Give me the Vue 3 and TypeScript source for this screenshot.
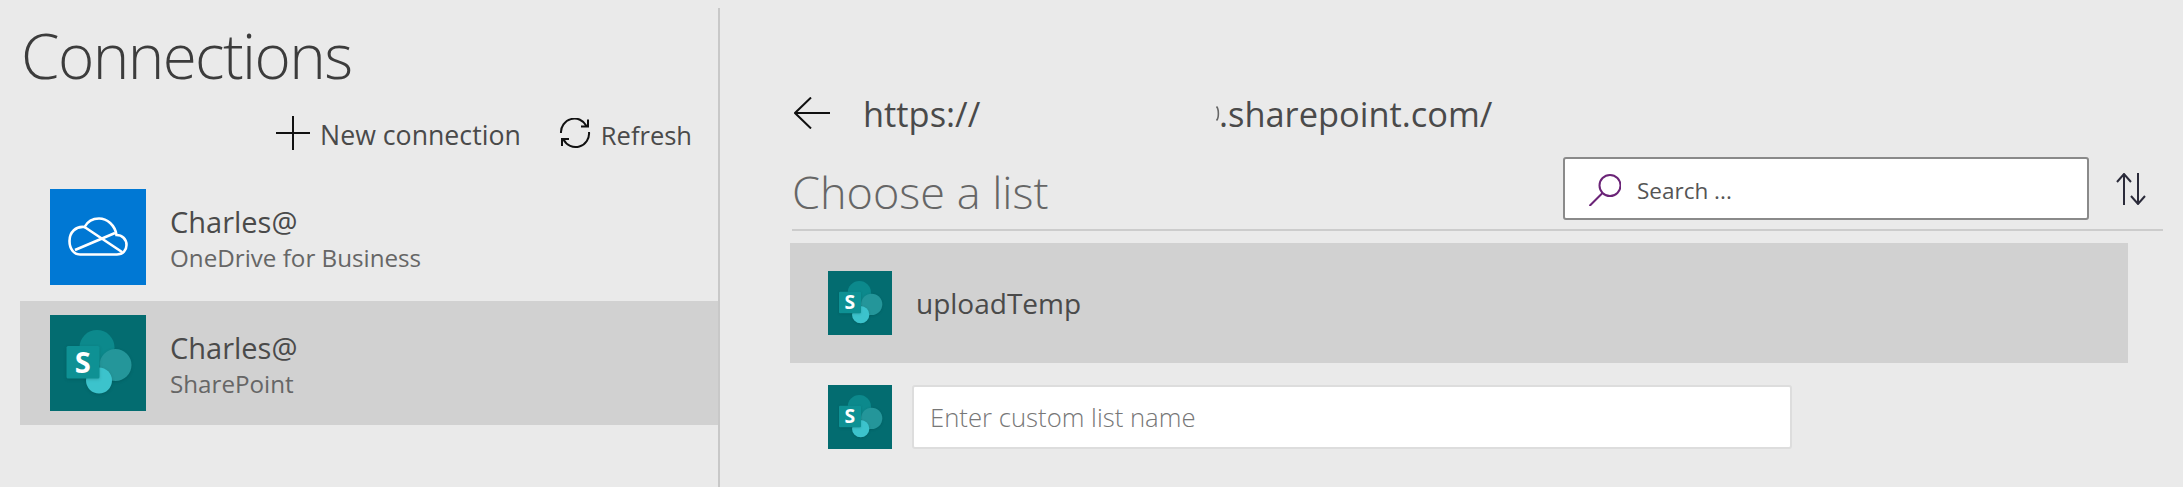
<script setup lang="ts">
const connections = [
  { name: 'Charles@', kind: 'OneDrive for Business', tile: 'onedrive', active: false },
  { name: 'Charles@', kind: 'SharePoint', tile: 'sharepoint', active: true },
]
</script>

<template>
  <div class="page">
    <section class="left">
      <h1 class="title">Connections</h1>
      <div class="toolbar">
        <button class="tool new">
          <svg width="34" height="34" viewBox="0 0 34 34" fill="none" stroke="#111" stroke-width="2">
            <path d="M0 17H34M17 0V34" />
          </svg>
          <span>New connection</span>
        </button>
        <button class="tool refresh">
          <svg width="32" height="30" viewBox="0 0 32 30" fill="none" stroke="#111" stroke-width="2">
            <path d="M2 15A13.5 13.5 0 0 1 27.5 8M29 1.5V8.5H22" />
            <path d="M30 14A13.5 13.5 0 0 1 4.5 21.500M3 28V21H10" />
          </svg>
          <span>Refresh</span>
        </button>
      </div>
      <ul class="connections">
        <li v-for="c in connections" :key="c.kind" class="connection" :class="{ active: c.active }">
          <div class="tile" :class="c.tile">
            <svg v-if="c.tile === 'onedrive'" width="96" height="96" viewBox="0 0 96 96" fill="none" stroke="#fff" stroke-width="2.6">
              <path d="M30 65.500H67C73 65.500 76.500 61 76.500 56C76.500 50 72 46 66.500 46C65 36 57 29.500 49 29.500C43 29.500 37.500 32.500 34.500 38C26 37 19.500 43 19.500 52C19.500 60 24 65.500 30 65.500Z" />
              <path d="M25 61L65 44M34.500 38L72 63" />
            </svg>
            <svg v-else width="96" height="96" viewBox="0 0 96 96">
              <circle cx="47" cy="32.500" r="17.500" fill="#0c898c" />
              <circle cx="65.500" cy="50" r="16" fill="#24969a" class="lobe" />
              <circle cx="49" cy="65.500" r="13" fill="#3cc3cc" class="lobe" />
              <rect x="16.500" y="31" width="33" height="32.500" rx="1.500" fill="#0e9194" class="lobe" />
              <text x="32.700" y="57.500" text-anchor="middle" class="s-mark">S</text>
            </svg>
          </div>
          <div class="connection-text">
            <div class="name">{{ c.name }}</div>
            <div class="kind">{{ c.kind }}</div>
          </div>
        </li>
      </ul>
    </section>

    <section class="right">
      <div class="url-row">
        <svg class="back" width="36" height="32" viewBox="0 0 36 32" fill="none" stroke="#111" stroke-width="2">
          <path d="M36 16H1M17 0.500L1 16L17 31.500" />
        </svg>
        <span class="url-start">https://</span>
        <svg class="url-trace" width="4" height="15" viewBox="0 0 4 15" fill="none" stroke="#666" stroke-width="1.6">
          <path d="M0.500 0.500C3 3 3 12 0.500 14.500" />
        </svg>
        <span class="url-end">.sharepoint.com/</span>
      </div>
      <div class="list-head">
        <h2 class="subtitle">Choose a list</h2>
        <div class="search">
          <svg width="32" height="32" viewBox="0 0 32 32" fill="none" stroke="#6b2477" stroke-width="2">
            <circle cx="21" cy="11.500" r="10.500" />
            <path d="M13.500 19L0.500 32" />
          </svg>
          <input class="search-input" placeholder="Search ..." />
        </div>
        <svg class="sort" width="30" height="32" viewBox="0 0 30 32" fill="none" stroke="#2b2b3a" stroke-width="2">
          <path d="M8 32V1M1 9L8 1L15 9M22 0V31M15 23L22 31L29 23" />
        </svg>
      </div>
      <div class="list-row">
        <div class="tile-small">
          <svg width="64" height="64" viewBox="0 0 96 96">
            <circle cx="47" cy="32.500" r="17.500" fill="#0c898c" />
            <circle cx="65.500" cy="50" r="16" fill="#24969a" class="lobe" />
            <circle cx="49" cy="65.500" r="13" fill="#3cc3cc" class="lobe" />
            <rect x="16.500" y="31" width="33" height="32.500" rx="1.500" fill="#0e9194" class="lobe" />
            <text x="32.700" y="57.500" text-anchor="middle" class="s-mark">S</text>
          </svg>
        </div>
        <span class="list-name">uploadTemp</span>
      </div>
      <div class="custom-row">
        <div class="tile-small">
          <svg width="64" height="64" viewBox="0 0 96 96">
            <circle cx="47" cy="32.500" r="17.500" fill="#0c898c" />
            <circle cx="65.500" cy="50" r="16" fill="#24969a" class="lobe" />
            <circle cx="49" cy="65.500" r="13" fill="#3cc3cc" class="lobe" />
            <rect x="16.500" y="31" width="33" height="32.500" rx="1.500" fill="#0e9194" class="lobe" />
            <text x="32.700" y="57.500" text-anchor="middle" class="s-mark">S</text>
          </svg>
        </div>
        <input class="custom-input" placeholder="Enter custom list name" />
      </div>
    </section>
  </div>
</template>

<style>
html, body { margin: 0; background: #eaeaea; }
</style>

<style scoped>
.page {
  display: flex;
  width: 2183px;
  height: 487px;
  overflow: hidden;
  background: #eaeaea;
  color: #444;
  font-family: "Open Sans", "Liberation Sans", sans-serif;
}
.left {
  box-sizing: border-box;
  width: 720px;
  height: 479px;
  margin-top: 8px;
  padding-left: 20px;
  border-right: 2px solid #c8c8c8;
}
.title {
  margin: 5px 0 0 1px;
  height: 84px;
  font-size: 62px;
  line-height: 84px;
  font-weight: 300;
  color: #3c3c3c;
  letter-spacing: -1.6px;
}
.toolbar {
  display: flex;
  justify-content: flex-end;
  align-items: center;
  gap: 38px;
  height: 50px;
  margin-top: 11px;
  padding-right: 26px;
}
.tool {
  display: flex;
  align-items: center;
  gap: 10px;
  padding: 0;
  border: 0;
  background: none;
  color: #4a4a4a;
  font: inherit;
  font-size: 26.700px;
}
.tool span { padding-top: 3px; }
.tool.refresh { font-size: 25.500px; }
.connections {
  list-style: none;
  margin: 17px 0 0;
  padding: 0;
}
.connection {
  display: flex;
  align-items: center;
  gap: 24px;
  height: 124px;
  padding-left: 30px;
}
.connection + .connection { margin-top: 2px; }
.connection.active { background: #d1d1d1; }
.tile { width: 96px; height: 96px; flex: none; }
.tile svg, .tile-small svg { display: block; }
.onedrive { background: #0078d4; }
.sharepoint, .tile-small { background: #036c70; }
.tile-small { width: 64px; height: 64px; flex: none; }
.lobe { filter: drop-shadow(0 1px 1.500px rgba(0, 40, 40, 0.2)); }
.s-mark {
  fill: #fff;
  font-family: "Open Sans", sans-serif;
  font-weight: 700;
  font-size: 29px;
}
.connection-text { padding-top: 5px; }
.name { font-size: 29px; line-height: 36px; color: #4a4a4a; }
.kind { margin-top: 1px; font-size: 24.200px; line-height: 34px; color: #666; }
.right {
  flex: 1;
  box-sizing: border-box;
  padding: 90px 20px 0 70px;
}
.url-row {
  display: flex;
  align-items: center;
  height: 46px;
  padding-left: 4px;
}
.back { flex: none; }
.url-start { margin-left: 33px; width: 353px; font-size: 34.400px; line-height: 46px; color: #4a4a4a; padding-top: 2px; }
.url-trace { flex: none; }
.url-end { font-size: 34.400px; line-height: 46px; color: #4a4a4a; padding-top: 2px; margin-left: -1px; }
.list-head {
  display: flex;
  align-items: flex-end;
  height: 84px;
  padding-bottom: 9px;
  margin-left: 2px;
  border-bottom: 2px solid #ccc;
  box-sizing: content-box;
}
.subtitle {
  margin: 0 0 -2px;
  font-size: 45px;
  font-weight: 300;
  color: #666;
  line-height: 60px;
}
.search {
  display: flex;
  align-items: center;
  gap: 16px;
  box-sizing: border-box;
  width: 526px;
  height: 63px;
  margin-left: auto;
  padding-left: 24px;
  background: #fff;
  border: 2px solid #8a8a8a;
  border-radius: 3px;
}
.search svg { margin-top: 3px; }
.search-input {
  flex: 1;
  min-width: 0;
  border: 0;
  outline: 0;
  padding: 3px 0 0;
  font: inherit;
  font-size: 22.500px;
}
.search-input::placeholder { color: #555; opacity: 1; }
.sort { flex: none; margin: 0 17px 15px 27px; }
.list-row {
  display: flex;
  align-items: center;
  gap: 24px;
  height: 120px;
  margin-top: 12px;
  margin-right: 35px;
  padding-left: 38px;
  background: #d1d1d1;
}
.list-name { font-size: 28px; color: #4a4a4a; }
.custom-row {
  display: flex;
  align-items: center;
  gap: 20px;
  margin-top: 22px;
  padding-left: 38px;
}
.custom-input {
  box-sizing: border-box;
  width: 880px;
  height: 64px;
  padding: 0 16px;
  background: #fff;
  border: 2px solid #ddd;
  border-radius: 3px;
  outline: 0;
  font: inherit;
  font-size: 25.700px;
  font-weight: 300;
}
.custom-input::placeholder { color: #777; opacity: 1; }
</style>
